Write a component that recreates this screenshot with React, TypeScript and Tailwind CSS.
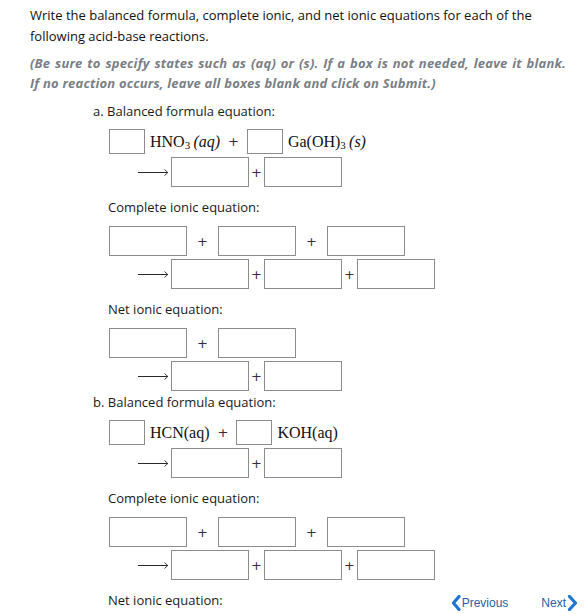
import React from 'react';

const Box: React.FC<{ small?: boolean }> = ({ small }) => (
    <div className={small ? 'w-[36px] h-[25px] border border-[#8c8c8c] bg-white' : 'w-[78px] h-[30px] border border-[#8c8c8c] bg-white'}></div>
);

const Plus: React.FC<{ className?: string }> = ({ className = '' }) => (
    <span className={`text-[13px] leading-none text-[#3a2a40] font-['DejaVu_Sans',sans-serif] ${className}`}>+</span>
);

const Arrow: React.FC = () => (
    <svg width="31" height="10" viewBox="0 0 31 10" className="mr-[2px]">
        <path d="M0 5.5H29.5" stroke="#111" strokeWidth="0.9" />
        <path d="M26.5 2.5L29.8 5.5L26.5 8.5" stroke="#111" strokeWidth="0.8" fill="none" />
    </svg>
);

const Label: React.FC<{ children: React.ReactNode; className?: string }> = ({ children, className = '' }) => (
    <div className={`text-[13px] leading-[20px] text-[#1a1a1a] ${className}`}>{children}</div>
);

// product row: arrow then boxes separated by tight plus signs
const ProductRow: React.FC<{ count: number }> = ({ count }) => (
    <div className="flex items-center pl-[29px] mt-[3px]">
        <Arrow />
        {Array.from({ length: count }).map((_, i) => (
            <React.Fragment key={i}>
                {i > 0 && <Plus className="w-[15px] text-center" />}
                <Box />
            </React.Fragment>
        ))}
    </div>
);

const ReactantRow: React.FC<{ count: number }> = ({ count }) => (
    <div className="flex items-center">
        {Array.from({ length: count }).map((_, i) => (
            <React.Fragment key={i}>
                {i > 0 && <Plus className="w-[31px] text-center" />}
                <Box />
            </React.Fragment>
        ))}
    </div>
);

const Formula: React.FC<{ children: React.ReactNode }> = ({ children }) => (
    <span className="font-['Liberation_Serif','DejaVu_Serif',serif] text-[16px] leading-none text-[#111] ml-[5px]">{children}</span>
);

const Section: React.FC<{ letter: string; left: React.ReactNode; right: React.ReactNode; plusGap: string }> = ({ letter, left, right, plusGap }) => (
    <div>
        <Label className="ml-[63px]">{letter}. Balanced formula equation:</Label>
        <div className="ml-[79px] mt-[8px]">
            <div className="flex items-center">
                <Box small />
                <Formula>{left}</Formula>
                <Plus className={plusGap} />
                <Box small />
                <Formula>{right}</Formula>
            </div>
            <ProductRow count={2} />
            <Label className="mt-[10px] -ml-[1px]">Complete ionic equation:</Label>
            <div className="mt-[9px]">
                <ReactantRow count={3} />
                <ProductRow count={3} />
            </div>
        </div>
    </div>
);

const App: React.FC = () => {
    return (
        <div className="w-[588px] h-[614px] overflow-hidden bg-white font-['Open_Sans',sans-serif] pt-[5px] pl-[30px] pr-[20px]">
            <p className="text-[13px] leading-[21px] text-[#111] w-[520px]">
                Write the balanced formula, complete ionic, and net ionic equations for each of the following acid-base reactions.
            </p>
            <div className="mt-[6px] text-[13px] leading-[20px] font-bold italic text-[#7a7f86] tracking-[0.2px]">
                <div className="w-[536px] text-justify [text-align-last:justify] whitespace-nowrap">
                    (Be sure to specify states such as (aq) or (s). If a box is not needed, leave it blank.
                </div>
                <div>If no reaction occurs, leave all boxes blank and click on Submit.)</div>
            </div>

            <div className="mt-[8px]">
                <Section
                    letter="a"
                    plusGap="mx-[8px]"
                    left={<><span>HNO</span><sub className="text-[11px]">3</sub><span className="italic">&thinsp;(aq)</span></>}
                    right={<><span>Ga(OH)</span><sub className="text-[11px]">3</sub><span className="italic">&thinsp;(s)</span></>}
                />
                <div className="ml-[79px]">
                    <Label className="mt-[10px] -ml-[1px]">Net ionic equation:</Label>
                    <div className="mt-[9px]">
                        <ReactantRow count={2} />
                        <ProductRow count={2} />
                    </div>
                </div>
            </div>

            <div className="mt-[1px]">
                <Section
                    letter="b"
                    plusGap="mx-[8px]"
                    left={<span>HCN(aq)</span>}
                    right={<span>KOH(aq)</span>}
                />
                <div className="ml-[79px] flex items-start justify-between mt-[10px]">
                    <Label className="-ml-[1px]">Net ionic equation:</Label>
                    <div className="flex items-center gap-[33px] mt-[4px] -mr-[10px] font-['Liberation_Sans',sans-serif] text-[12px] text-[#2a5ea8]">
                        <div className="flex items-center gap-[1px]">
                            <svg width="10" height="16" viewBox="0 0 10 16">
                                <path d="M8 1.5L2.5 8L8 14.5" stroke="#1f74d0" strokeWidth="3.2" fill="none" strokeLinecap="round" strokeLinejoin="round" />
                            </svg>
                            <span>Previous</span>
                        </div>
                        <div className="flex items-center gap-[1px]">
                            <span>Next</span>
                            <svg width="11" height="16" viewBox="0 0 11 16">
                                <path d="M2.5 1.5L8.5 8L2.5 14.5" stroke="#1f74d0" strokeWidth="3.2" fill="none" strokeLinecap="round" strokeLinejoin="round" />
                            </svg>
                        </div>
                    </div>
                </div>
            </div>
        </div>
    );
};

export default App;
